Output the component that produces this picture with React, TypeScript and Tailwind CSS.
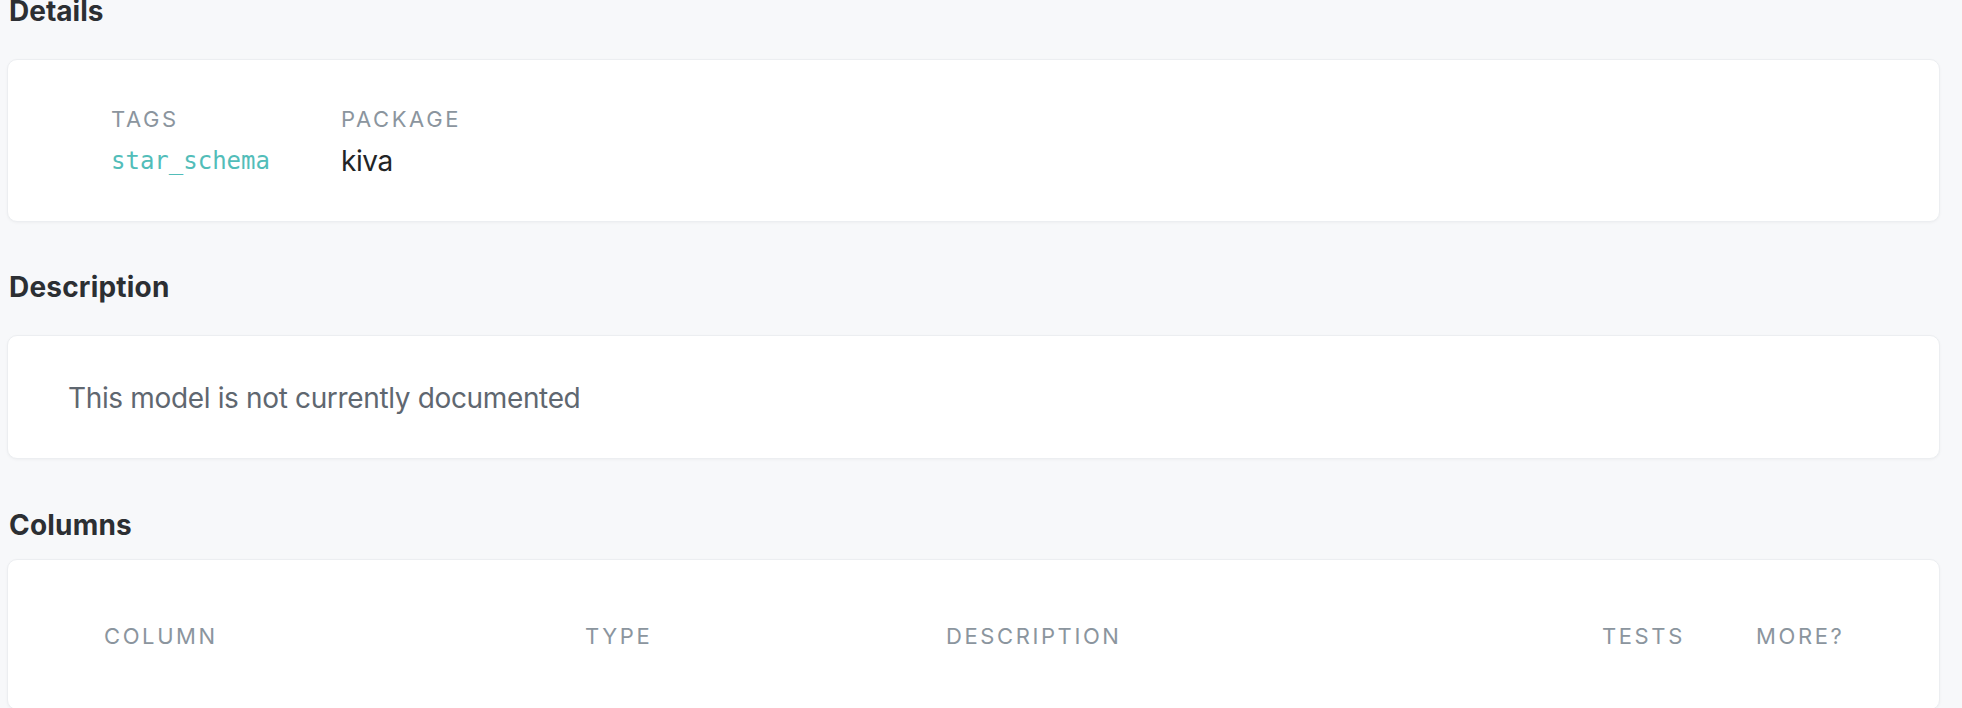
const labelCls =
  "text-[22px] leading-[26px] tracking-[2.6px] uppercase text-[#8b959e] font-['Inter',sans-serif]";

const cardCls =
  "bg-white rounded-[10px] border border-[#eceef1] shadow-[0_1px_3px_rgba(0,0,0,0.04)]";

const headingCls =
  "text-[28px] leading-[34px] font-bold text-[#2c2f33] font-['Inter',sans-serif]";

const columnHeaders = [
  { label: "Column", width: "w-[481px]" },
  { label: "Type", width: "w-[361px]" },
  { label: "Description", width: "w-[656px]" },
  { label: "Tests", width: "w-[154px]" },
  { label: "More?", width: "w-[120px]" },
];

export default function App() {
  return (
    <div className="h-[708px] overflow-hidden bg-[#f7f8fa] pl-[7px] pr-[22px] font-['Inter',sans-serif]">
      {/* Details */}
      <h2 className={`${headingCls} -mt-[6px] pl-[2px]`}>Details</h2>
      <div className={`${cardCls} mt-[31px] pt-[46px] pb-[43px] pl-[103px]`}>
        <div className="flex">
          <div className="w-[230px]">
            <div className={labelCls}>Tags</div>
            <div className="mt-[12px] leading-[34px] text-[24px] text-[#52bdb9] font-['DejaVu_Sans_Mono',monospace]">
              star_schema
            </div>
          </div>
          <div>
            <div className={labelCls}>Package</div>
            <div className="mt-[12px] leading-[34px] text-[28px] tracking-[-0.4px] text-[#222426]">kiva</div>
          </div>
        </div>
      </div>

      {/* Description */}
      <h2 className={`${headingCls} mt-[48px] pl-[2px] tracking-[0.2px]`}>Description</h2>
      <div className={`${cardCls} mt-[31px] pt-[45px] pb-[43px] pl-[60px]`}>
        <p className="text-[28px] leading-[34px] tracking-[-0.35px] text-[#5f6770]">
          This model is not currently documented
        </p>
      </div>

      {/* Columns */}
      <h2 className={`${headingCls} mt-[49px] pl-[2px] tracking-[0.2px]`}>Columns</h2>
      <div className={`${cardCls} mt-[17px] pt-[63px] pb-[60px] pl-[96px]`}>
        <div className="flex">
          {columnHeaders.map((col) => (
            <div key={col.label} className={`${col.width} ${labelCls}`}>
              {col.label}
            </div>
          ))}
        </div>
      </div>
    </div>
  );
}
